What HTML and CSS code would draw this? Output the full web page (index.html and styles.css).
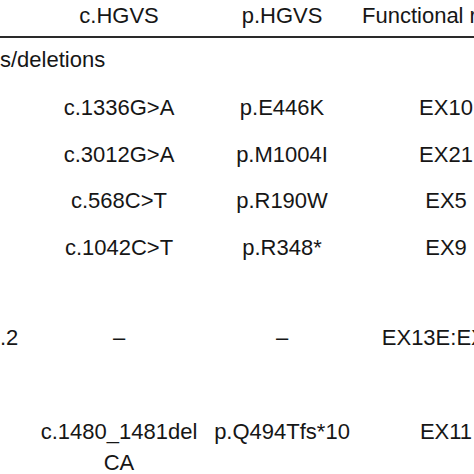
FILE: index.html
```html
<!DOCTYPE html>
<html>
<head>
<meta charset="utf-8">
<link rel="stylesheet" href="styles.css">
</head>
<body>
<div class="table">
  <div class="row head">
    <div class="cell"></div>
    <div class="cell">c.HGVS</div>
    <div class="cell">p.HGVS</div>
    <div class="cell">Functional region</div>
  </div>
  <div class="section">s/deletions</div>
  <div class="row r1">
    <div class="cell"></div>
    <div class="cell">c.1336G&gt;A</div>
    <div class="cell">p.E446K</div>
    <div class="cell">EX10</div>
  </div>
  <div class="row">
    <div class="cell"></div>
    <div class="cell">c.3012G&gt;A</div>
    <div class="cell">p.M1004I</div>
    <div class="cell">EX21</div>
  </div>
  <div class="row">
    <div class="cell"></div>
    <div class="cell">c.568C&gt;T</div>
    <div class="cell">p.R190W</div>
    <div class="cell">EX5</div>
  </div>
  <div class="row">
    <div class="cell"></div>
    <div class="cell">c.1042C&gt;T</div>
    <div class="cell">p.R348*</div>
    <div class="cell">EX9</div>
  </div>
  <div class="row r5">
    <div class="cell first">.2</div>
    <div class="cell">–</div>
    <div class="cell">–</div>
    <div class="cell">EX13E:EX14</div>
  </div>
  <div class="row r6">
    <div class="cell"></div>
    <div class="cell">c.1480_1481del<br>CA</div>
    <div class="cell">p.Q494Tfs*10</div>
    <div class="cell">EX11</div>
  </div>
</div>
</body>
</html>
```

FILE: styles.css
```css
html, body {
  margin: 0;
  padding: 0;
  background: #ffffff;
  overflow: hidden;
  width: 474px;
  height: 474px;
}

body {
  font-family: "Liberation Sans", Arial, sans-serif;
  font-size: 22px;
  line-height: 31px;
  color: #161616;
}

.table {
  width: 530px;
}

.row {
  display: grid;
  grid-template-columns: 36px 166px 160px 168px;
  padding-top: 15.5px;
}

.cell {
  text-align: center;
  white-space: nowrap;
}

.cell.first {
  text-align: left;
}

.row.head {
  padding-top: 0;
  padding-bottom: 5px;
  border-bottom: 2px solid #2a2a2a;
}

.section {
  padding-top: 6px;
}

.row.r1 {
  padding-top: 17px;
}

.row.r5 {
  padding-top: 59.5px;
}

.row.r6 {
  padding-top: 63px;
}
```
